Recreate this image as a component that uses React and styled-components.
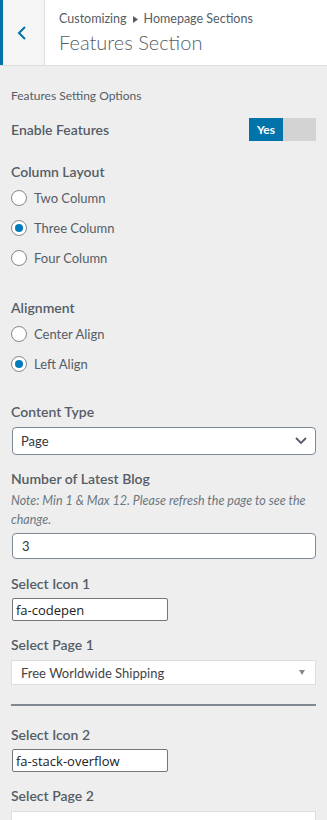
import styled, { createGlobalStyle } from "styled-components";

const Global = createGlobalStyle`
  html, body {
    margin: 0;
    padding: 0;
    background: #eeeeee;
  }
  body {
    font-family: Lato, "Noto Sans", sans-serif;
    color: #555d66;
  }
  * { box-sizing: border-box; }
`;

const Header = styled.div`
  display: flex;
  height: 66px;
  background: #fff;
  border-bottom: 1px solid #dddddd;
`;

const BackButton = styled.div`
  width: 45px;
  flex: none;
  display: flex;
  align-items: center;
  justify-content: center;
  background: #f5f5f5;
  border-left: 3px solid #0073aa;
  border-right: 1px solid #dddddd;
  padding-right: 3px;
`;

const TitleBlock = styled.div`
  padding: 10px 0 0 14px;
`;

const Crumb = styled.div`
  font-size: 12.5px;
  line-height: 18px;
  color: #555d66;
  display: flex;
  align-items: center;
  gap: 6px;
`;

const Title = styled.h1`
  margin: 0;
  font-size: 20px;
  font-weight: 300;
  line-height: 29px;
  color: #555d66;
`;

const Body = styled.div`
  padding: 22px 11px 0 11px;
`;

const Desc = styled.div`
  font-size: 12px;
  line-height: 16px;
  margin-bottom: 14px;
`;

const ToggleRow = styled.div`
  display: flex;
  justify-content: space-between;
  align-items: center;
  height: 23px;
  margin-bottom: 21px;
`;

const Label = styled.div`
  font-size: 14px;
  font-weight: 600;
  line-height: 20px;
  margin-top: ${(p) => p.$top || 0}px;
`;

const Toggle = styled.div`
  display: flex;
  width: 67px;
  height: 23px;
`;

const ToggleOn = styled.div`
  width: 34px;
  background: #0073aa;
  color: #fff;
  font-size: 12px;
  font-weight: 700;
  display: flex;
  align-items: center;
  justify-content: center;
`;

const ToggleOff = styled.div`
  flex: 1;
  background: #d3d3d3;
`;

const RadioRow = styled.label`
  display: flex;
  align-items: center;
  height: 30px;
  font-size: 13px;
  gap: 7px;
  padding-top: 1px;
`;

const RadioDot = styled.span`
  width: 16px;
  height: 16px;
  border-radius: 50%;
  border: 1px solid #7e8993;
  background: #fff;
  display: flex;
  align-items: center;
  justify-content: center;
  &::after {
    content: "";
    width: 8px;
    height: 8px;
    border-radius: 50%;
    background: ${(p) => (p.$checked ? "#007cba" : "transparent")};
  }
`;

const SelectBox = styled.div`
  margin-top: 5px;
  height: 28px;
  margin-left: 1px;
  background: #fff;
  border: 1px solid #7e8993;
  border-radius: 4px;
  display: flex;
  align-items: center;
  justify-content: space-between;
  padding: 0 8px 0 8px;
  font-size: 13px;
  color: #32373c;
`;

const Note = styled.div`
  font-size: 12.5px;
  font-style: italic;
  line-height: 19px;
  margin-top: 2px;
  color: #6c7781;
`;

const NumberInput = styled.div`
  margin-top: 4px;
  margin-left: 1px;
  height: 26px;
  background: #fff;
  border: 1px solid #7e8993;
  border-radius: 4px;
  display: flex;
  align-items: center;
  padding: 0 9px;
  font-size: 13px;
  color: #32373c;
`;

const IconInput = styled.div`
  margin-top: 4px;
  margin-left: 1px;
  width: 156px;
  height: 23px;
  background: #fff;
  border: 1px solid #767676;
  border-radius: 2px;
  display: flex;
  align-items: center;
  padding: 0 3px;
  font-size: 13px;
  color: #222;
  font-family: "Open Sans", "Noto Sans", sans-serif;
`;

const Select2 = styled.div`
  margin-top: 5px;
  height: 25px;
  background: #fff;
  border: 1px solid #dddddd;
  display: flex;
  align-items: center;
  justify-content: space-between;
  padding: 0 10px 0 9px;
  font-size: 13px;
  color: #444;
`;

const Divider = styled.hr`
  margin: 19px 0 0 0;
  height: 2px;
  border: none;
  background: #7e8993;
`;

const Radio = ({ checked, children }) => (
  <RadioRow>
    <RadioDot $checked={checked} />
    {children}
  </RadioRow>
);

const Caret = () => (
  <svg width="6" height="5" viewBox="0 0 6 5">
    <path d="M0 0 L6 0 L3 5 Z" fill="#888" />
  </svg>
);

export default function App() {
  return (
    <>
      <Global />
      <Header>
        <BackButton>
          <svg width="10" height="14" viewBox="0 0 10 14">
            <path d="M8 1 L2 7 L8 13" fill="none" stroke="#0073aa" strokeWidth="2" />
          </svg>
        </BackButton>
        <TitleBlock>
          <Crumb>
            Customizing
            <svg width="5" height="7" viewBox="0 0 5 7">
              <path d="M0 0 L5 3.5 L0 7 Z" fill="#555d66" />
            </svg>
            Homepage Sections
          </Crumb>
          <Title>Features Section</Title>
        </TitleBlock>
      </Header>
      <Body>
        <Desc>Features Setting Options</Desc>
        <ToggleRow>
          <Label>Enable Features</Label>
          <Toggle>
            <ToggleOn>Yes</ToggleOn>
            <ToggleOff />
          </Toggle>
        </ToggleRow>

        <Label $top={1}>Column Layout</Label>
        <Radio>Two Column</Radio>
        <Radio checked>Three Column</Radio>
        <Radio>Four Column</Radio>

        <Label $top={26}>Alignment</Label>
        <Radio>Center Align</Radio>
        <Radio checked>Left Align</Radio>

        <Label $top={24}>Content Type</Label>
        <SelectBox>
          Page
          <svg width="12" height="8" viewBox="0 0 12 8">
            <path d="M1 1 L6 6 L11 1" fill="none" stroke="#555d66" strokeWidth="1.8" />
          </svg>
        </SelectBox>

        <Label $top={14}>Number of Latest Blog</Label>
        <Note>Note: Min 1 &amp; Max 12. Please refresh the page to see the change.</Note>
        <NumberInput>3</NumberInput>

        <Label $top={15}>Select Icon 1</Label>
        <IconInput>fa-codepen</IconInput>

        <Label $top={14}>Select Page 1</Label>
        <Select2>
          Free Worldwide Shipping
          <Caret />
        </Select2>

        <Divider />

        <Label $top={19}>Select Icon 2</Label>
        <IconInput>fa-stack-overflow</IconInput>

        <Label $top={14}>Select Page 2</Label>
        <Select2>
          &nbsp;
          <Caret />
        </Select2>
      </Body>
    </>
  );
}
